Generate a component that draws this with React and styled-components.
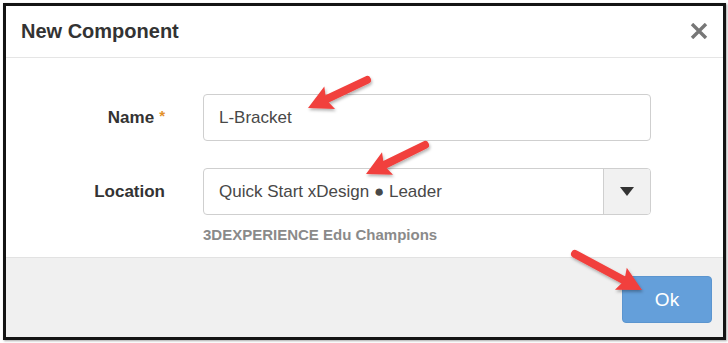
import styled, { createGlobalStyle } from 'styled-components';

const GlobalStyle = createGlobalStyle`
  html, body {
    margin: 0;
    padding: 0;
    background: #ffffff;
    font-family: "Liberation Sans", Arial, sans-serif;
  }
`

const Page = styled.div`
  position: relative;
  width: 728px;
  height: 343px;
  padding: 3px 2px 3px 3px;
  box-sizing: border-box;
`

const Dialog = styled.div`
  width: 723px;
  height: 337px;
  border: 3px solid #141414;
  box-sizing: border-box;
  display: flex;
  flex-direction: column;
  overflow: hidden;
  background: #fff;
  box-shadow: 1px 1px 2px rgba(0,0,0,0.35);
`

const Header = styled.div`
  height: 52px;
  flex: none;
  box-sizing: border-box;
  display: flex;
  align-items: center;
  justify-content: space-between;
  padding: 0 15px 1px;
  border-bottom: 1px solid #e5e5e5;
`

const Title = styled.h1`
  margin: 0;
  font-size: 20px;
  font-weight: 700;
  color: #333;
`

const Close = styled.button`
  border: none;
  background: none;
  padding: 0;
  width: 18px;
  height: 16px;
  display: flex;
  cursor: pointer;
`

const Body = styled.div`
  flex: 1;
  padding-top: 36px;
  display: grid;
  grid-template-columns: 159px 448px;
  column-gap: 38px;
  row-gap: 27px;
  align-content: start;
`

const Label = styled.label`
  align-self: start;
  justify-self: end;
  line-height: 47px;
  font-size: 17px;
  font-weight: 700;
  color: #333;
  white-space: nowrap;
`

const Required = styled.span`
  color: #e2912b;
  font-size: 15px;
  margin-left: 5px;
  position: relative;
  top: -2px;
`

const Field = styled.div`
  display: flex;
  flex-direction: column;
`

const Input = styled.input`
  width: 100%;
  height: 47px;
  box-sizing: border-box;
  border: 1px solid #cfcfcf;
  border-radius: 4px;
  padding: 0 15px;
  font-family: inherit;
  font-size: 17px;
  color: #484848;
  outline: none;
`

const Select = styled.div`
  height: 47px;
  box-sizing: border-box;
  border: 1px solid #cfcfcf;
  border-radius: 4px;
  display: flex;
  overflow: hidden;
`

const SelectValue = styled.div`
  flex: 1;
  display: flex;
  align-items: center;
  padding: 0 15px;
  font-size: 17px;
  color: #484848;
  white-space: nowrap;
`

const SelectToggle = styled.div`
  width: 46px;
  border-left: 1px solid #cfcfcf;
  background: #f1f1f1;
  display: flex;
  align-items: center;
  justify-content: center;
`

const Caret = styled.span`
  width: 0;
  height: 0;
  border-left: 7px solid transparent;
  border-right: 7px solid transparent;
  border-top: 9px solid #333;
`

const Hint = styled.div`
  margin-top: 11px;
  font-size: 15px;
  font-weight: 700;
  color: #8a8a8a;
`

const Footer = styled.div`
  height: 80px;
  flex: none;
  box-sizing: border-box;
  border-top: 1px solid #e2e2e2;
  background: #f0f0f0;
  display: flex;
  justify-content: flex-end;
  align-items: flex-start;
  padding: 18px 11px 0 0;
`

const OkButton = styled.button`
  width: 90px;
  height: 47px;
  border: 1px solid #5b95cf;
  border-radius: 4px;
  background: #649fda;
  color: #fff;
  font-family: inherit;
  font-size: 19px;
  cursor: pointer;
`

const Overlay = styled.svg`
  position: absolute;
  left: 0;
  top: 0;
  pointer-events: none;
`

const arrows = [
  { tail: [367, 80], tip: [308, 108] },
  { tail: [425, 145], tip: [366, 174] },
  { tail: [575, 254], tip: [642, 290] },
]

const Arrow = ({ tail, tip }) => {
  const dx = tip[0] - tail[0]
  const dy = tip[1] - tail[1]
  const len = Math.hypot(dx, dy)
  const ux = dx / len
  const uy = dy / len
  const nx = -uy
  const ny = ux
  const head = 24
  const half = 12.5
  const bx = tip[0] - ux * head
  const by = tip[1] - uy * head
  const nxb = tip[0] - ux * (head - 4)
  const nyb = tip[1] - uy * (head - 4)
  const pts = [
    [tip[0], tip[1]],
    [bx + nx * half, by + ny * half],
    [nxb, nyb],
    [bx - nx * half, by - ny * half],
  ].map(p => p.join(',')).join(' ')
  return (
    <g>
      <line x1={tail[0]} y1={tail[1]} x2={nxb} y2={nyb} stroke="#f1403d" strokeWidth="8" strokeLinecap="round" />
      <polygon points={pts} fill="#f1403d" />
    </g>
  )
}

const App = () => {
  return (
    <Page>
      <GlobalStyle />
      <Dialog>
        <Header>
          <Title>New Component</Title>
          <Close aria-label="Close">
            <svg width="18" height="16" viewBox="0 0 18 16">
              <path d="M2 1 L16 15 M16 1 L2 15" stroke="#777" strokeWidth="3.4" />
            </svg>
          </Close>
        </Header>
        <Body>
          <Label>Name<Required>*</Required></Label>
          <Input readOnly value="L-Bracket" />
          <Label>Location</Label>
          <Field>
            <Select>
              <SelectValue>Quick Start xDesign ● Leader</SelectValue>
              <SelectToggle><Caret /></SelectToggle>
            </Select>
            <Hint>3DEXPERIENCE Edu Champions</Hint>
          </Field>
        </Body>
        <Footer>
          <OkButton>Ok</OkButton>
        </Footer>
      </Dialog>
      <Overlay width="728" height="343" viewBox="0 0 728 343">
        <defs>
          <filter id="shadow" x="-20%" y="-20%" width="140%" height="140%">
            <feDropShadow dx="1" dy="2" stdDeviation="1.5" floodColor="#000" floodOpacity="0.3" />
          </filter>
        </defs>
        <g filter="url(#shadow)">
          {arrows.map((a, i) => <Arrow key={i} tail={a.tail} tip={a.tip} />)}
        </g>
      </Overlay>
    </Page>
  )
}

export default App
